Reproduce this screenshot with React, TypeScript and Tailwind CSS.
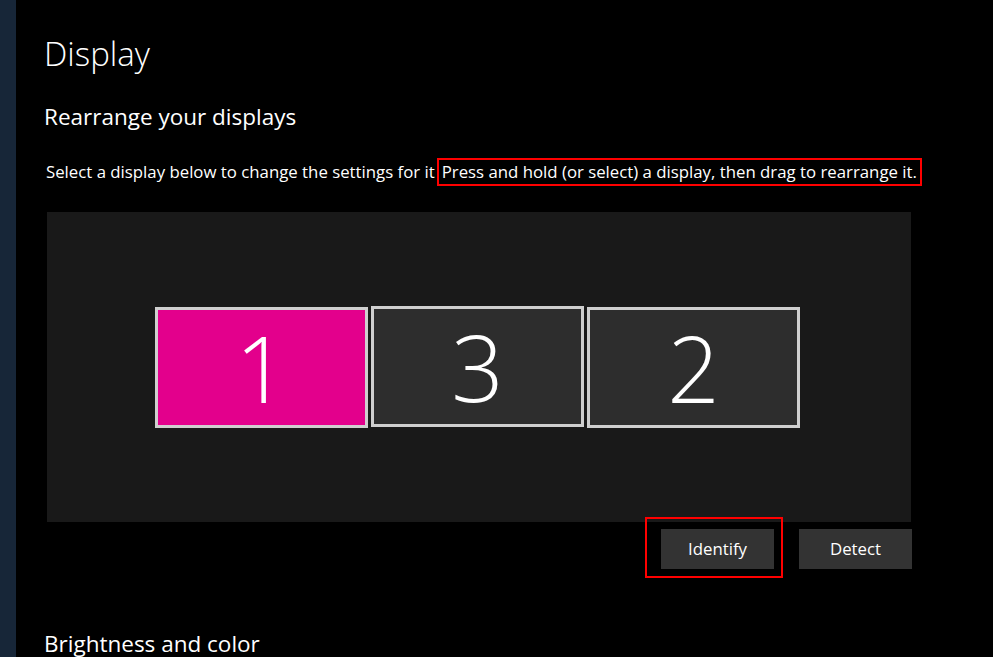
import React from "react";

const font = { fontFamily: "'Open Sans', 'Noto Sans', sans-serif" };

const monitors = [
  { n: "1", left: "left-[108px]", top: "top-[95px]", bg: "bg-[#e3008c]" },
  { n: "3", left: "left-[324px]", top: "top-[94px]", bg: "bg-[#2d2d2d]" },
  { n: "2", left: "left-[540px]", top: "top-[95px]", bg: "bg-[#2d2d2d]" },
];

export default function App() {
  return (
    <div className="flex h-[657px] w-full overflow-hidden bg-black text-white" style={font}>
      {/* nav edge */}
      <div className="w-[16px] shrink-0 bg-[#172638]" />

      <div className="flex-1 pl-[28px] pt-[32px]">
        <h1 className="text-[33px] font-light leading-[44px]">Display</h1>
        <h2 className="mt-[26px] text-[22.5px] leading-[30px]">Rearrange your displays</h2>

        <p className="mt-[26px] flex items-center pl-[2px] text-[16.8px] leading-[24px]">
          <span>Select a display below to change the settings for it</span>
          <span className="ml-[2px] inline-block border-2 border-[#ff0000] px-[3px]">
            Press and hold (or select) a display, then drag to rearrange it.
          </span>
        </p>

        {/* arrangement canvas */}
        <div className="relative ml-[3px] mt-[26px] h-[310px] w-[864px] bg-[#191919]">
          {monitors.map((m) => (
            <div
              key={m.n}
              className={`absolute ${m.left} ${m.top} flex h-[121px] w-[213px] items-center justify-center border-[3px] border-[#cfcfcf] ${m.bg}`}
            >
              <span className="text-[92px] font-light leading-none">{m.n}</span>
            </div>
          ))}
        </div>

        <div className="mt-[7px] flex w-[868px] justify-end gap-[25px]">
          <div className="relative">
            <button className="h-[40px] w-[113px] bg-[#333333] text-[16.8px]">Identify</button>
            <div className="pointer-events-none absolute -bottom-[9px] -left-[16px] -right-[9px] -top-[12px] border-2 border-[#ff0000]" />
          </div>
          <button className="h-[40px] w-[113px] bg-[#333333] text-[16.8px]">Detect</button>
        </div>

        <h2 className="mt-[60px] text-[22.5px] leading-[30px]">Brightness and color</h2>
      </div>
    </div>
  );
}
